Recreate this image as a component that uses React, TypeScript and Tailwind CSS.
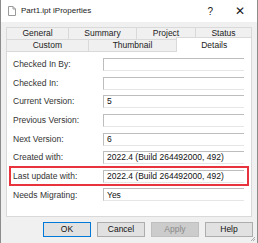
import React from "react";

const ROWS: { label: string; value: string }[] = [
  { label: "Checked In By:", value: "" },
  { label: "Checked In:", value: "" },
  { label: "Current Version:", value: "5" },
  { label: "Previous Version:", value: "" },
  { label: "Next Version:", value: "6" },
  { label: "Created with:", value: "2022.4 (Build 264492000, 492)" },
  { label: "Last update with:", value: "2022.4 (Build 264492000, 492)" },
  { label: "Needs Migrating:", value: "Yes" },
];

function DocIcon() {
  return (
    <svg width="8" height="10" viewBox="0 0 8 10" className="shrink-0">
      <path d="M0.5 0.5 H5 L7.5 3 V9.5 H0.5 Z" fill="#fff" stroke="#9a9a9a" />
      <path d="M5 0.5 V3 H7.5" fill="none" stroke="#9a9a9a" />
    </svg>
  );
}

function Tab({ label, w, selected }: { label: string; w: string; selected?: boolean }) {
  return (
    <div
      className={
        "flex items-center justify-center border border-[#d9d9d9] -ml-px first:ml-0 " +
        w +
        (selected ? " bg-white border-b-0 h-[15px] -mt-[2px] relative z-10" : " bg-[#f0f0f0] h-[13px]")
      }
    >
      {label}
    </div>
  );
}

function Btn({ label, kind }: { label: string; kind?: "default" | "disabled" }) {
  const cls =
    kind === "default"
      ? "bg-[#e1e1e1] border-[#0078d7] text-[#111]"
      : kind === "disabled"
      ? "bg-[#cccccc] border-[#bfbfbf] text-[#8a8a8a]"
      : "bg-[#e1e1e1] border-[#adadad] text-[#111]";
  return (
    <div className={"w-[48px] h-[15px] border flex items-center justify-center " + cls}>{label}</div>
  );
}

export default function App() {
  return (
    <div
      className="w-[258px] h-[243px] bg-[#f0f0f0] border-x border-[#8c8c8c] flex flex-col text-[8.5px] text-[#1a1a1a] overflow-hidden relative"
      style={{ fontFamily: "'Liberation Sans', Arial, sans-serif" }}
    >
      {/* Title bar */}
      <div className="h-[22px] bg-white flex items-center pl-[7px] pr-[12px] shrink-0">
        <DocIcon />
        <span className="ml-[5px] text-[8px] text-[#222]">Part1.ipt iProperties</span>
        <span className="ml-auto text-[10px] mr-[22px]">?</span>
        <span className="text-[12px] font-light leading-none" style={{ fontFamily: "'DejaVu Sans', sans-serif" }}>✕</span>
      </div>

      {/* Tabs */}
      <div className="px-[5px] pt-[5px] shrink-0">
        <div className="flex text-[#222]">
          <Tab label="General" w="w-[63px]" />
          <Tab label="Summary" w="w-[69px]" />
          <Tab label="Project" w="w-[60px]" />
          <Tab label="Status" w="w-[57px]" />
        </div>
        <div className="flex -mt-px text-[#222] items-end">
          <Tab label="Custom" w="w-[83px]" />
          <Tab label="Thumbnail" w="w-[90px]" />
          <Tab label="Details" w="w-[76px]" selected />
        </div>
      </div>

      {/* Panel */}
      <div className="mx-[5px] -mt-px h-[166px] bg-white border border-[#d9d9d9] relative shrink-0">
        <div className="flex flex-col gap-[5.65px] pt-[6px] pl-[6px]">
          {ROWS.map((r) => (
            <div key={r.label} className="flex items-center h-[13px]">
              <div className="w-[90px] text-[#333]">{r.label}</div>
              <div className="w-[141px] h-[13px] border-t border-l border-[#bdbdbd] border-b border-b-[#e6e6e6] flex items-center pl-[3px] text-[#111]">
                {r.value}
              </div>
            </div>
          ))}
        </div>
        <div className="absolute left-[2px] top-[114px] w-[240px] h-[20px] border-2 border-[#e8323c]" />
      </div>

      {/* Buttons */}
      <div className="flex gap-[6px] justify-end pr-[4px] mt-[5px] shrink-0">
        <Btn label="OK" kind="default" />
        <Btn label="Cancel" />
        <Btn label="Apply" kind="disabled" />
        <Btn label="Help" />
      </div>

      <svg width="6" height="6" viewBox="0 0 6 6" className="absolute right-[1px] bottom-[1px]">
        <path d="M5 1 L1 5 M5 3 L3 5" stroke="#9a9a9a" strokeWidth="0.8" />
      </svg>
    </div>
  );
}
